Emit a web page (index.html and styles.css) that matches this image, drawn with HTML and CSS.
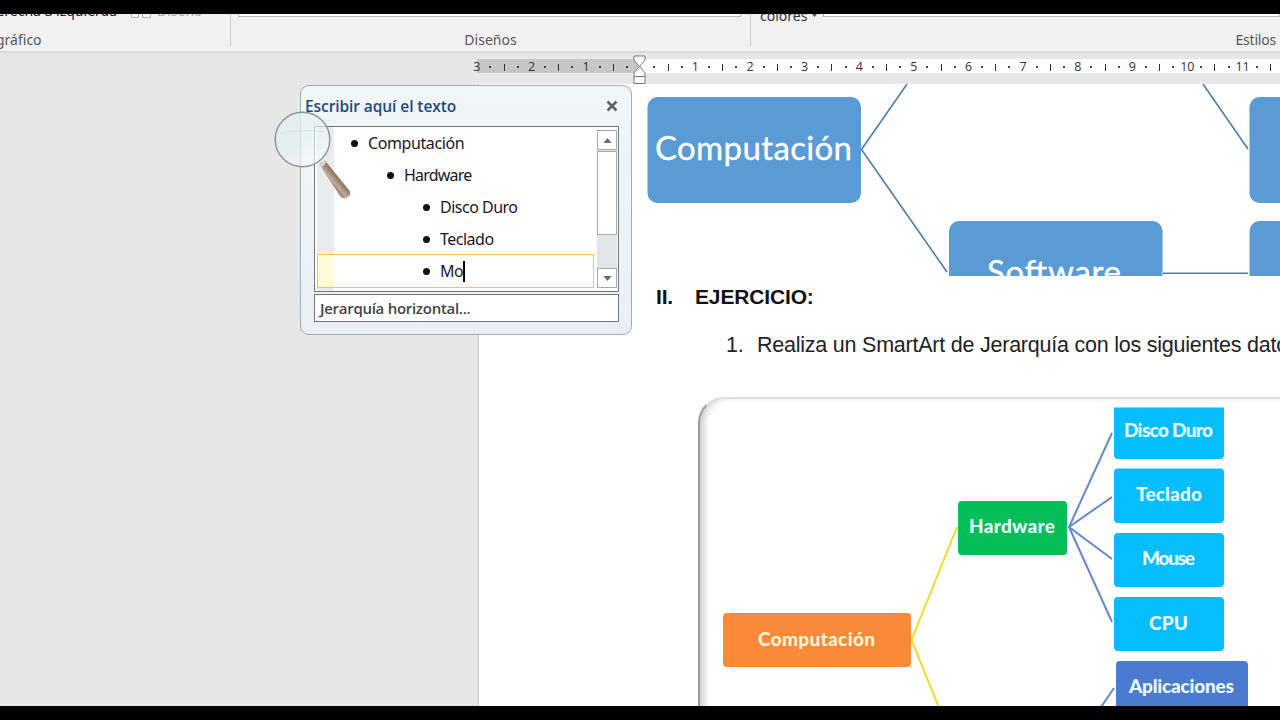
FILE: index.html
```
<!DOCTYPE html>
<html lang="es">
<head>
    <meta charset="UTF-8">
    <meta name="viewport" content="width=device-width, initial-scale=1.0">
    <title>Documento - SmartArt</title>
    <link rel="stylesheet" href="styles.css">
</head>
<body>

<div class="window">
    <div class="ribbon">
        <div class="group group-graphic">
            <div class="commands">
                <span class="rtl">De derecha a izquierda</span>
                <svg class="layout-icon" width="20" height="12" viewBox="0 0 20 12"><path d="M.5 1.5h7v10h-7zM11.5 1.5h8v10h-8z" fill="#fafafa" stroke="#b0b0b0"/></svg>
                <span class="disabled">Diseño</span>
            </div>
            <div class="label">gráfico</div>
        </div>
        <div class="group group-layouts">
            <div class="gallery"></div>
            <div class="label">Diseños</div>
        </div>
        <div class="group group-styles">
            <div class="commands">
                <span class="colors">colores</span>
                <svg class="arrow" width="5" height="3" viewBox="0 0 7 4"><path d="M0 0h7L3.5 4z" fill="#555"/></svg>
                <div class="gallery"></div>
            </div>
            <div class="label">Estilos</div>
        </div>
    </div>

    <div class="workspace">
        <div class="ruler" id="ruler"></div>
        <svg class="indent" width="13" height="30" viewBox="0 0 13 30">
            <path d="M1 1h11v4L6.500 11.500 12 18v3.500H1V18l5.500-6.500L1 5z" fill="#fff" stroke="#777"/>
            <path d="M1 21.500h11v7H1z" fill="#fff" stroke="#777"/>
        </svg>

        <div class="page">
            <svg class="smartart" width="640" height="192" viewBox="640 84 640 192">
                <g class="links">
                    <path d="M907 84L861.500 149.500 947 272"/>
                    <path d="M1203 84L1248 149"/>
                    <path d="M1163 273.300H1248"/>
                </g>
                <g class="boxes">
                    <rect x="647.500" y="97" width="213.500" height="106" rx="10"/>
                    <rect x="949" y="221" width="213.500" height="106" rx="10"/>
                    <rect x="1249.500" y="97" width="213.500" height="106" rx="10"/>
                    <rect x="1249.500" y="221" width="213.500" height="106" rx="10"/>
                </g>
                <text x="655" y="159.500" textLength="197">Computación</text>
                <text x="987" y="284" textLength="134">Software</text>
            </svg>

            <h1><span class="num">II.</span>EJERCICIO:</h1>
            <p class="item"><span class="num">1.</span>Realiza un SmartArt de Jerarquía con los siguientes datos:</p>

            <div class="picture">
                <svg width="580" height="309" viewBox="700 399 580 309">
                    <g class="yellow">
                        <path d="M957 527L911.500 640 940 710"/>
                    </g>
                    <g class="blue">
                        <path d="M1112 433L1069 527 1112 622"/>
                        <path d="M1112 497L1069 527 1112 559"/>
                        <path d="M1114 688L1099 710"/>
                    </g>
                    <rect x="723" y="613" width="188" height="54" rx="4" fill="#fa8a37"/>
                    <rect x="958" y="501" width="109" height="54" rx="4" fill="#05be57"/>
                    <g fill="#06beff">
                        <path d="M1114 407.500h110V455q0 4-4 4h-102q-4 0-4-4z"/>
                        <rect x="1114" y="468.500" width="110" height="54.500" rx="4"/>
                        <rect x="1114" y="533" width="110" height="54" rx="4"/>
                        <rect x="1114" y="597" width="110" height="54" rx="4"/>
                    </g>
                    <rect x="1116" y="661" width="132" height="60" rx="4" fill="#4a7bd0"/>
                    <text x="758" y="646" textLength="117" fill="#fff3d8">Computación</text>
                    <text x="969" y="533" textLength="86">Hardware</text>
                    <text x="1124" y="436.500" textLength="89">Disco Duro</text>
                    <text x="1136" y="501" textLength="66">Teclado</text>
                    <text x="1142" y="565" textLength="53">Mouse</text>
                    <text x="1149" y="629.500" textLength="39">CPU</text>
                    <text x="1129" y="692.500" textLength="105">Aplicaciones</text>
                </svg>
            </div>
        </div>

        <div class="text-pane">
            <div class="title">
                <span>Escribir aquí el texto</span>
                <svg width="12" height="12" viewBox="0 0 12 12"><path d="M1.500 1.500l9 9M10.500 1.500l-9 9" stroke="#636363" stroke-width="2.600"/></svg>
            </div>
            <div class="list">
                <div class="rows">
                    <div class="row level1">Computación</div>
                    <div class="row level2">Hardware</div>
                    <div class="row level3">Disco Duro</div>
                    <div class="row level3">Teclado</div>
                    <div class="row level3 active">Mo<i class="caret"></i></div>
                </div>
                <div class="scroll">
                    <div class="btn"><svg width="9" height="5" viewBox="0 0 10 6"><path d="M0 6h10L5 0z" fill="#6b6b6b"/></svg></div>
                    <div class="thumb"></div>
                    <div class="btn"><svg width="9" height="5" viewBox="0 0 10 6"><path d="M0 0h10L5 6z" fill="#6b6b6b"/></svg></div>
                </div>
            </div>
            <div class="layout-name">Jerarquía horizontal...</div>
        </div>

        <!-- lupa usada como cursor -->
        <svg class="magnifier" width="80" height="92" viewBox="273 110 80 92">
            <defs>
                <linearGradient id="glass" x1="0" y1="0" x2="1" y2="1">
                    <stop offset="0" stop-color="#dfeeee" stop-opacity=".85"/>
                    <stop offset=".5" stop-color="#e4f2f2" stop-opacity=".7"/>
                    <stop offset="1" stop-color="#fff" stop-opacity=".65"/>
                </linearGradient>
                <linearGradient id="wood" gradientUnits="userSpaceOnUse" x1="330" y1="184" x2="337" y2="178">
                    <stop offset="0" stop-color="#8f7d72"/>
                    <stop offset=".45" stop-color="#c5aa98"/>
                    <stop offset="1" stop-color="#927c6c"/>
                </linearGradient>
            </defs>
            <path d="M319 164l6-3.500L349 190q3 4-1 7-4 3-8-1z" fill="url(#wood)"/>
            <path d="M319 165.500q4 0 6-4" stroke="#ddd9d4" stroke-width="3" fill="none"/>
            <circle cx="302.500" cy="139.500" r="27.300" fill="url(#glass)" stroke="#909898" stroke-width="1.500"/>
            <path d="M280 134q18-6 45-2" stroke="#c3dddd" stroke-opacity=".6" fill="none"/>
        </svg>
    </div>
</div>

<script>
    // Regla: 3 cm a la izquierda del margen y 12 a la derecha
    const ruler = document.getElementById("ruler");

    function addMark(className, text) {
        const mark = document.createElement("span");
        mark.className = className;
        mark.innerText = text;
        ruler.appendChild(mark);
    }

    for (let cm = -3; cm < 12; cm++) {
        addMark("number", cm === 0 ? "" : Math.abs(cm));
        addMark("dot", "");
        addMark("half", "");
        addMark("dot", "");
    }
</script>

</body>
</html>
```
FILE: styles.css
```
* {
    box-sizing: border-box;
}

body {
    margin: 0;
    height: 720px;
    padding: 14px 0;
    background-color: #000;
    overflow: hidden;
    font-family: "Open Sans", "Noto Sans", sans-serif;
}

.window {
    height: 692px;
    overflow: hidden;
    background-color: #e7e7e7;
}

/* Cinta de opciones */
.ribbon {
    display: flex;
    height: 39px;
    background-color: #f1f1f1;
    border-bottom: 2px solid #d9d9d9;
    overflow: hidden;
    font-family: "Noto Sans", sans-serif;
    font-size: 14px;
    color: #555;
}

.group {
    display: flex;
    flex-direction: column;
    justify-content: space-between;
    height: 32px;
    border-right: 1px solid #cfcfcf;
}

.group-graphic {
    width: 231px;
}

.group-layouts {
    width: 520px;
    padding-left: 7px;
}

.group-styles {
    width: 529px;
    border-right: none;
}

.commands {
    display: flex;
    height: 10px;
    white-space: nowrap;
    line-height: 18px;
}

.rtl {
    display: flex;
    justify-content: flex-end;
    width: 117px;
    margin-top: -12px;
    color: #222;
}

.layout-icon {
    margin: -8px 6px 0 14px;
}

.disabled {
    margin-top: -12px;
    color: #aaa;
}

.colors {
    margin: -7px 0 0 9px;
    color: #333;
}

.arrow {
    margin-left: 5px;
}

.gallery {
    height: 3px;
    width: 503px;
    background-color: #fff;
    border: 1px solid #b5bcba;
    border-top: none;
}

.group-styles .gallery {
    width: 460px;
    margin-left: 6px;
}

.label {
    height: 18px;
    line-height: 18px;
    margin-bottom: -3px;
}

.group-graphic .label {
    text-indent: -4px;
}

.group-layouts .label {
    text-align: center;
    padding-right: 7px;
}

.group-styles .label {
    text-align: right;
    padding-right: 4px;
    letter-spacing: -0.2px;
}

/* Regla */
.workspace {
    position: relative;
    height: 653px;
    padding-top: 6px;
}

.ruler {
    display: flex;
    align-items: center;
    height: 14px;
    margin-left: 470px;
    background: linear-gradient(to right, #e7e7e7 7px, #c6c6c6 7px, #c6c6c6 170px, #fff 170px);
    overflow: hidden;
    font-size: 12.5px;
    line-height: 16px;
    color: #333;
}

.ruler span {
    display: flex;
    justify-content: center;
    flex: 0 0 13.66px;
}

.ruler .number {
    margin-top: 2px;
}

.dot::before {
    content: "";
    width: 2px;
    height: 2px;
    margin-top: 2px;
    background-color: #444;
}

.half::before {
    content: "";
    width: 1px;
    height: 7px;
    margin-top: 2px;
    background-color: #333;
}

.indent {
    position: absolute;
    left: 633px;
    top: 2px;
}

/* Documento */
.page {
    margin: 11px 0 0 478px;
    height: 622px;
    background-color: #fff;
    border-left: 1px solid #c9c9c9;
    overflow: hidden;
}

.smartart {
    display: block;
    margin-left: 161px;
    font-family: Lato, sans-serif;
    font-size: 33px;
    fill: #fff;
    stroke: #fff;
    stroke-width: 0.3;
}

.links {
    fill: none;
    stroke: #4a7ca8;
    stroke-width: 1.6;
}

.boxes {
    fill: #5b9bd5;
    stroke: none;
}

h1, .item {
    display: flex;
    margin: 0;
    font-family: "Liberation Sans", Arial, sans-serif;
    white-space: nowrap;
}

h1 {
    margin: 8px 0 0 177px;
    font-size: 21px;
    letter-spacing: -0.15px;
    line-height: 26px;
    color: #111;
}

h1 .num {
    flex: 0 0 39px;
}

.item {
    margin: 22px 0 0 247px;
    font-size: 21.5px;
    letter-spacing: -0.23px;
    line-height: 26px;
    color: #222;
}

.item .num {
    flex: 0 0 31px;
}

.picture {
    width: 640px;
    height: 340px;
    margin: 39px 0 0 219px;
    border: 2px solid #ddd;
    border-left-color: #999;
    border-radius: 26px;
    box-shadow: inset 7px 0 7px -3px #ccc;
}

.picture svg {
    display: block;
    font-family: Lato, sans-serif;
    font-weight: 900;
    font-size: 19px;
    fill: #e8fbff;
}

.yellow, .blue {
    fill: none;
    stroke-width: 2;
}

.yellow {
    stroke: #f5d928;
}

.blue {
    stroke: #6288d0;
}

/* Panel de texto */
.text-pane {
    position: absolute;
    left: 300px;
    top: 32px;
    width: 332px;
    height: 250px;
    padding: 0 13px 0 13px;
    background: linear-gradient(#f1f6f8, #ebeff3);
    border: 1.5px solid #9eafb2;
    border-radius: 9px;
}

.title {
    display: flex;
    justify-content: space-between;
    align-items: center;
    height: 40px;
    margin-left: -9px;
    font-size: 15.5px;
    font-weight: 600;
    letter-spacing: -0.08px;
    color: #1c4a7d;
}

.list {
    display: flex;
    justify-content: space-between;
    width: 305px;
    height: 166px;
    padding: 0 1px 0 2px;
    background-color: #fff;
    border: 1.5px solid #70777c;
}

.rows {
    width: 277px;
    background: linear-gradient(to right, #e9ebec 17px, #fff 17px);
}

.row {
    display: flex;
    align-items: center;
    height: 32px;
    font-family: "Noto Sans", sans-serif;
    font-size: 16px;
    letter-spacing: -0.4px;
    color: #1d1425;
}

.row::before {
    content: "";
    width: 7px;
    height: 7px;
    margin-right: 10px;
    border-radius: 50%;
    background-color: #111;
}

.level1 {
    padding-left: 34px;
}

.level2 {
    padding-left: 70px;
    letter-spacing: -0.8px;
}

.level3 {
    padding-left: 106px;
    letter-spacing: -0.5px;
}

.active {
    height: 34px;
    margin-top: -1px;
    padding-left: 105px;
    border: 1.5px solid #f0c368;
    background: linear-gradient(to right, #fffbd8 16px, #fff 16px);
}

.caret {
    width: 1.5px;
    height: 21px;
    background-color: #000;
}

.scroll {
    display: flex;
    flex-direction: column;
    width: 20px;
    margin-top: 3px;
    height: 158px;
    background-color: #e2e5e8;
}

.btn {
    display: flex;
    justify-content: center;
    align-items: center;
    height: 20px;
    background-color: #fff;
    border: 1px solid #a5a8aa;
}

.thumb {
    height: 84px;
    margin: 1px 0 33px;
    background-color: #fff;
    border: 1px solid #a5a8aa;
}

.layout-name {
    width: 305px;
    height: 28px;
    margin-top: 2px;
    padding-left: 5px;
    border: 1.5px solid #70777c;
    background-color: #fff;
    font-size: 15px;
    font-weight: 600;
    letter-spacing: -0.28px;
    line-height: 27px;
    color: #444;
}

.magnifier {
    position: absolute;
    left: 273px;
    top: 57px;
}
```
